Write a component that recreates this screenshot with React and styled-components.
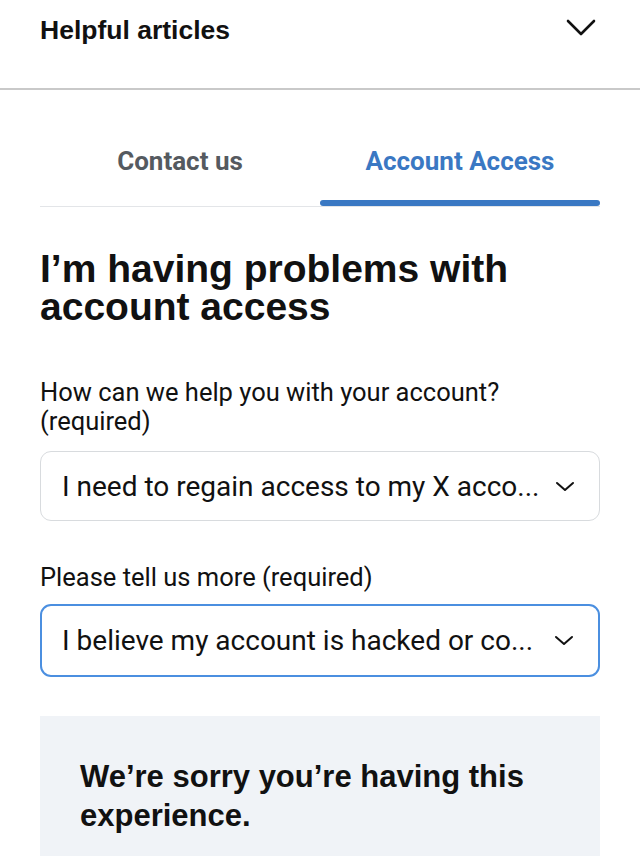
import styled, { createGlobalStyle } from 'styled-components';

const GlobalStyle = createGlobalStyle`
  body {
    margin: 0;
    background: #ffffff;
    color: #0f1419;
    font-family: Roboto, "Liberation Sans", sans-serif;
  }
`;

const Page = styled.div`
  width: 640px;
  min-height: 856px;
  overflow: hidden;
`;

const Header = styled.header`
  height: 90px;
  box-sizing: border-box;
  padding: 12px 44px 0 40px;
  display: flex;
  justify-content: space-between;
  align-items: flex-start;
  border-bottom: 2px solid #c9c9c9;
`;

const HeaderTitle = styled.h2`
  margin: 0;
  font-family: "Liberation Sans", Arial, sans-serif;
  font-weight: 700;
  font-size: 26.5px;
  line-height: 36px;
  color: #111;
`;

const HeaderChevron = styled.svg`
  margin-top: 7px;
`;

const Content = styled.main`
  padding: 0 40px;
`;

const Tabs = styled.nav`
  display: flex;
  border-bottom: 1px solid #e3e5e8;
`;

const Tab = styled.div`
  flex: 1;
  position: relative;
  height: 116px;
  box-sizing: border-box;
  padding-top: 55px;
  text-align: center;
  font-family: Roboto, "Liberation Sans", sans-serif;
  font-weight: 700;
  font-size: 26px;
  line-height: 32px;
  color: ${(p) => (p.$active ? '#3a78c3' : '#555a60')};

  &::after {
    content: '';
    display: ${(p) => (p.$active ? 'block' : 'none')};
    position: absolute;
    left: 0;
    right: 0;
    bottom: 0;
    height: 6px;
    border-radius: 3px;
    background: #3a78c3;
  }
`;

const Heading = styled.h1`
  margin: 43px 0 0;
  font-family: "Liberation Sans", Arial, sans-serif;
  font-weight: 700;
  font-size: 39px;
  line-height: 38px;
  color: #111;
`;

const Label = styled.label`
  display: block;
  margin-top: ${(p) => p.$top}px;
  font-size: 25.5px;
  line-height: 29px;
  color: #111;
`;

const Select = styled.div`
  margin-top: ${(p) => p.$top}px;
  height: ${(p) => (p.$focused ? 73 : 70)}px;
  box-sizing: border-box;
  display: flex;
  align-items: center;
  justify-content: space-between;
  padding: 0 24px 0 ${(p) => (p.$focused ? 20 : 21)}px;
  border: ${(p) => (p.$focused ? '2px solid #4b8fe0' : '1px solid #d8dbde')};
  border-radius: 11px;
  font-size: 28px;
  color: #111;
`;

const SelectText = styled.span`
  white-space: nowrap;
`;

const Notice = styled.section`
  margin-top: 39px;
  background: #f0f3f7;
  padding: 41px 40px 40px;
`;

const NoticeTitle = styled.h3`
  margin: 0;
  font-family: "Liberation Sans", Arial, sans-serif;
  font-weight: 700;
  font-size: 31px;
  line-height: 39px;
  color: #111;
`;

const Chevron = ({ w = 20, h = 11, sw = 2 }) => (
  <svg width={w} height={h} viewBox={`0 0 ${w} ${h}`} fill="none">
    <polyline
      points={`${sw},${sw} ${w / 2},${h - sw} ${w - sw},${sw}`}
      stroke="#111"
      strokeWidth={sw}
      strokeLinecap="round"
      strokeLinejoin="round"
    />
  </svg>
);

export default function App() {
  return (
    <Page>
      <GlobalStyle />
      <Header>
        <HeaderTitle>Helpful articles</HeaderTitle>
        <HeaderChevron width="30" height="18" viewBox="0 0 30 18" fill="none">
          <polyline points="2,2 15,15 28,2" stroke="#111" strokeWidth="2.6" strokeLinecap="round" strokeLinejoin="round" />
        </HeaderChevron>
      </Header>
      <Content>
        <Tabs>
          <Tab>Contact us</Tab>
          <Tab $active>Account Access</Tab>
        </Tabs>
        <Heading>I’m having problems with account access</Heading>
        <Label $top={52}>
          How can we help you with your account?
          <br />
          (required)
        </Label>
        <Select $top={15}>
          <SelectText>I need to regain access to my X acco...</SelectText>
          <Chevron />
        </Select>
        <Label $top={42}>Please tell us more (required)</Label>
        <Select $top={12} $focused>
          <SelectText>I believe my account is hacked or co...</SelectText>
          <Chevron />
        </Select>
        <Notice>
          <NoticeTitle>We’re sorry you’re having this experience.</NoticeTitle>
        </Notice>
      </Content>
    </Page>
  );
}
